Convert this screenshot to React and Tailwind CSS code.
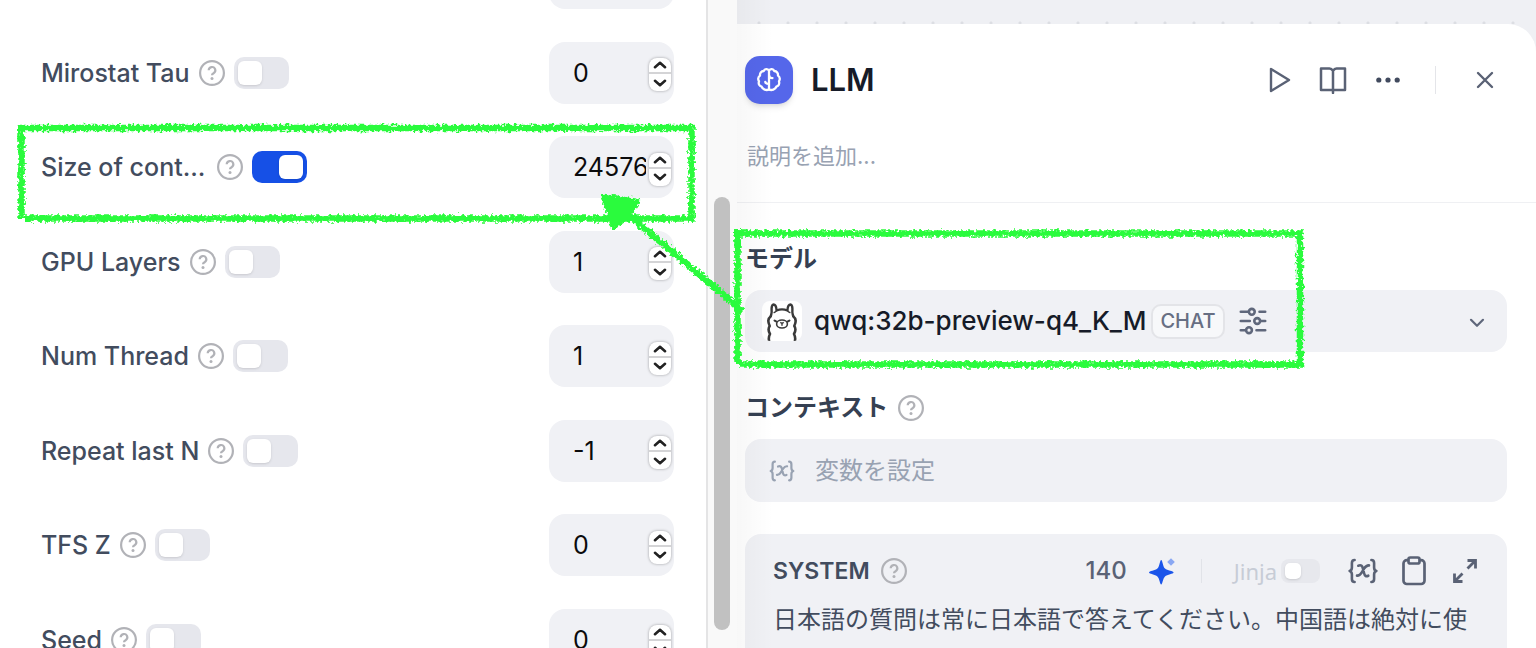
import React, { useState } from 'react'

const ROWS = [
  { id: 'eta', label: '', value: '0', on: false },
  { id: 'tau', label: 'Mirostat Tau', value: '0', on: false },
  { id: 'ctx', label: 'Size of cont...', value: '24576', on: true },
  { id: 'gpu', label: 'GPU Layers', value: '1', on: false },
  { id: 'thread', label: 'Num Thread', value: '1', on: false },
  { id: 'repeat', label: 'Repeat last N', value: '-1', on: false },
  { id: 'tfs', label: 'TFS Z', value: '0', on: false },
  { id: 'seed', label: 'Seed', value: '0', on: false },
]

function Help() {
  return (
    <svg viewBox="0 0 26 26" className="size-[26px] shrink-0 text-[#b1b2b7]" fill="none" stroke="currentColor" aria-hidden="true">
      <circle cx="13" cy="13" r="11.900" strokeWidth="2.200" />
      <path d="M9.700 10.300a3.300 3.300 0 1 1 4.900 2.900c-1.100.6-1.600 1-1.600 2.100" strokeWidth="2.200" />
      <circle cx="13" cy="18.400" r="1.500" fill="currentColor" stroke="none" />
    </svg>
  )
}

function Switch({ label, initial }) {
  const [on, setOn] = useState(initial)
  return (
    <button
      type="button"
      role="switch"
      aria-checked={on}
      aria-label={label}
      onClick={() => setOn(!on)}
      className={`flex h-8 w-[55px] shrink-0 rounded-[10px] p-1 ${on ? 'justify-end bg-[#1650e6]' : 'justify-start bg-[#e6e7ed]'}`}
    >
      <span className="size-6 rounded-[6px] bg-white shadow-sm" />
    </button>
  )
}

function NumberBox({ id, initial }) {
  const [value, setValue] = useState(initial)
  const step = (n) => setValue(String(Number(value) + n))
  return (
    <div className="flex h-[62px] w-[125px] shrink-0 items-center rounded-2xl bg-[#f0f1f5] pl-6 pr-[3px]">
      <input
        id={id}
        inputMode="numeric"
        value={value}
        onChange={(e) => setValue(e.target.value)}
        className="w-[73px] min-w-0 bg-transparent text-[25px] leading-8 text-[#0b0b0c] outline-none"
      />
      <div className="ml-auto mt-1 flex flex-col divide-y-2 divide-[#d4d4d6] overflow-hidden rounded-[8px] bg-white shadow-[0_0_3px_rgba(0,0,0,0.35)]">
        <button type="button" aria-label="Increase" onClick={() => step(1)} className="flex h-4 w-[22px] items-center justify-center">
          <svg viewBox="0 0 14 8" className="h-2 w-3.5" fill="none" stroke="#222" strokeWidth="2.600" strokeLinecap="round" strokeLinejoin="round"><path d="M2 6.200 7 1.800l5 4.400" /></svg>
        </button>
        <button type="button" aria-label="Decrease" onClick={() => step(-1)} className="flex h-[17px] w-[22px] items-center justify-center">
          <svg viewBox="0 0 14 8" className="h-2 w-3.5" fill="none" stroke="#222" strokeWidth="2.600" strokeLinecap="round" strokeLinejoin="round"><path d="M2 1.800 7 6.200l5-4.400" /></svg>
        </button>
      </div>
    </div>
  )
}

function VarIcon({ className }) {
  return (
    <svg viewBox="0 0 30 26" className={className} fill="none" stroke="currentColor" strokeWidth="2.600" strokeLinecap="round" strokeLinejoin="round" aria-hidden="true">
      <path d="M6.600 2C4.500 2 3.900 3 3.900 5v4.500c0 2-.8 3.100-2.300 3.500 1.500.4 2.300 1.500 2.300 3.500V21c0 2 .6 3 2.700 3" />
      <path d="M23.400 2c2.100 0 2.700 1 2.700 3v4.500c0 2 .8 3.100 2.300 3.500-1.500.4-2.300 1.500-2.300 3.500V21c0 2-.6 3-2.700 3" />
      <path d="M10.300 7.700c2.800-1.100 3.900.2 4.500 2.400l1.300 5.200c.6 2.400 1.800 3.500 4.200 2.400M21 7.400c-1.900-.2-3.300.9-4.900 3.200l-2.500 4c-1.300 2.200-2.600 3.200-4.600 3" />
    </svg>
  )
}

function BrainIcon() {
  return (
    <svg viewBox="0 0 26 26" className="size-[26px]" fill="none" stroke="#fff" strokeWidth="2.300" strokeLinecap="round" strokeLinejoin="round" aria-hidden="true">
      <path d="M13 3.500v19" />
      <path d="M13 3.300C11.500 1.600 8.700 1.700 7.700 4 5.200 4.200 3.700 6.200 4 8.600 2 10 1.700 12.600 3 14.300c-.9 2.500.4 4.700 2.600 5.300.9 2.800 4.900 4.300 7.400 2.700" />
      <path d="M13 3.300c1.500-1.700 4.300-1.600 5.300.7 2.500.2 4 2.200 3.700 4.600 2 1.400 2.300 4 1 5.700.9 2.500-.4 4.700-2.600 5.300-.9 2.800-4.900 4.300-7.400 2.700" />
      <path d="M9.300 14.800c0 1.300 1 2 3.400 2M13.300 9c0 1.700 1.200 2.100 3.200 2.100" />
    </svg>
  )
}

function LlamaIcon() {
  return (
    <svg viewBox="0 0 40 40" className="size-10 shrink-0 rounded-[8px] bg-white" fill="none" stroke="#3a3a3a" strokeLinecap="round" strokeLinejoin="round" aria-hidden="true">
      <path strokeWidth="2.600" d="M7 39.500c-.6-3 .1-4.800 1-6.500-1.800-3-1.900-5.600-.3-8-1.700-3.600-1.900-7.500.9-9.500" />
      <path strokeWidth="2.600" d="M33 39.500c.6-3-.1-4.800-1-6.500 1.800-3 1.900-5.600.3-8 1.700-3.600 1.900-7.500-.9-9.500" />
      <path strokeWidth="2.400" d="M8.800 15c.6-2.500 1.200-3 .8-5.500-.2-3 .4-6 1.800-6 1.900 0 3 2.600 3.200 6 3-1.300 7.800-1.300 10.800 0 .2-3.400 1.300-6 3.200-6 1.400 0 2 3 1.800 6-.4 2.500.2 3 .8 5.500" />
      <path strokeWidth="1.500" d="M12.200 11.500c1-.2 1.800-.8 2.400-2M27.800 11.500c-1-.2-1.800-.8-2.400-2" />
      <ellipse cx="20" cy="23" rx="5.400" ry="4" strokeWidth="1.600" />
      <path strokeWidth="1.400" d="m18.800 21.600 1.200.9 1.200-.9M20 22.500v1.700" />
      <path strokeWidth="2.200" d="M12.600 19.600l1.500.8M27.400 19.600l-1.500.8" />
    </svg>
  )
}

function SettingsPanel() {
  return (
    <section className="min-w-0 overflow-hidden bg-white">
      <ul className="-mt-[69px] pl-[41px] pr-8">
        {ROWS.map((row) => (
          <li key={row.id} className="flex items-center justify-between odd:h-[94px] even:h-[95px]">
            <div className="flex items-center gap-[9px]">
              <label htmlFor={row.id} className={`whitespace-nowrap text-[25px] font-medium leading-8 text-[#424c5e] ${row.on ? 'w-[167px]' : ''}`}>
                {row.label}
              </label>
              <Help />
              <Switch label={row.label} initial={row.on} />
            </div>
            <NumberBox id={row.id} initial={row.value} />
          </li>
        ))}
      </ul>
    </section>
  )
}

function NodeHeader() {
  return (
    <header className="border-b border-[#eff0f3] pb-[30px] pl-2 pr-[42px] pt-8">
      <div className="flex h-12 items-center">
        <span className="flex size-12 items-center justify-center rounded-[15px] bg-[#5567ea] shadow-md">
          <BrainIcon />
        </span>
        <h1 className="ml-[18px] text-[31px] font-semibold leading-10 text-[#161b28]">LLM</h1>
        <div className="ml-auto flex items-center text-[#5a6275]">
          <button type="button" aria-label="Run">
            <svg viewBox="0 0 22 26" className="h-[26px] w-[22px]" fill="none" stroke="currentColor" strokeWidth="2.400" strokeLinejoin="round"><path d="M2 2v22l18-11z" /></svg>
          </button>
          <button type="button" aria-label="Documentation" className="ml-7">
            <svg viewBox="0 0 28 28" className="size-7" fill="none" stroke="currentColor" strokeWidth="2.500" strokeLinejoin="round" strokeLinecap="round"><path d="M14 4.800V27M14 4.800C13 3.200 12 2.500 10.500 2.500H2v21.500h24V2.500h-8.500C16 2.500 15 3.200 14 4.800z" /></svg>
          </button>
          <button type="button" aria-label="More" className="ml-7 text-[#414a5e]">
            <svg viewBox="0 0 26 26" className="size-[26px]" fill="currentColor"><circle cx="3.800" cy="13" r="2.600" /><circle cx="13" cy="13" r="2.600" /><circle cx="22.200" cy="13" r="2.600" /></svg>
          </button>
          <span className="ml-[34px] h-7 w-px bg-[#e4e5e9]" />
          <button type="button" aria-label="Close" className="ml-10">
            <svg viewBox="0 0 18 18" className="size-[18px]" fill="none" stroke="currentColor" strokeWidth="2.400" strokeLinecap="round"><path d="m2 2 14 14M16 2 2 16" /></svg>
          </button>
        </div>
      </div>
      <input
        aria-label="説明"
        placeholder="説明を追加..."
        className="mt-9 block h-8 w-full bg-transparent pl-[2px] text-[22px] text-[#98a2b2] outline-none placeholder:text-[#98a2b2] placeholder:opacity-100"
      />
    </header>
  )
}

function ModelField() {
  return (
    <div>
      <h2 className="text-[24px] font-semibold leading-8 text-[#354052]">モデル</h2>
      <div className="mt-[15px] flex h-[62px] items-center rounded-2xl bg-[#f0f1f5] pl-[17px] pr-[22px]">
        <LlamaIcon />
        <span className="ml-3 whitespace-nowrap text-[26px] font-medium leading-8 text-[#161b28]">qwq:32b-preview-q4_K_M</span>
        <span className="ml-[5px] flex h-[35px] items-center rounded-[10px] border-2 border-[#e3e4e8] bg-[#f7f8fa] px-[7px] text-[20px] font-medium text-[#676f83]">CHAT</span>
        <button type="button" aria-label="Model parameters" className="ml-[14px] text-[#5f677b]">
          <svg viewBox="0 0 28 28" className="size-7" fill="none" stroke="currentColor" strokeWidth="2.600" strokeLinecap="round">
            <path d="M1.800 4.800h7.700M20.500 4.800h5.700M1.800 14h9M21.500 14h4.700M1.800 23.200h5M17.500 23.200h8.700" />
            <circle cx="12.800" cy="4.800" r="2.900" /><circle cx="18.200" cy="14" r="2.900" /><circle cx="10" cy="23.200" r="2.900" />
          </svg>
        </button>
        <button type="button" aria-label="Choose model" className="ml-auto text-[#5f677b]">
          <svg viewBox="0 0 16 10" className="mt-[3px] h-[10px] w-4" fill="none" stroke="currentColor" strokeWidth="2.200" strokeLinecap="round" strokeLinejoin="round"><path d="m2 1.800 6 6 6-6" /></svg>
        </button>
      </div>
    </div>
  )
}

function ContextField() {
  return (
    <div className="mt-10">
      <h2 className="flex items-center gap-[10px] text-[24px] font-semibold leading-8 text-[#354052]">
        コンテキスト
        <Help />
      </h2>
      <button type="button" className="mt-[15px] flex h-[63px] w-full items-center gap-5 rounded-2xl bg-[#f0f1f5] pl-6 text-[24px] leading-8 text-[#98a2b2]">
        <VarIcon className="h-[22px] w-[26px]" />
        変数を設定
      </button>
    </div>
  )
}

function SystemPrompt() {
  const [jinja, setJinja] = useState(false)
  return (
    <div className="mt-8 rounded-2xl bg-[#f0f1f5] pb-6 pl-7 pr-7 pt-[21px]">
      <div className="flex h-8 items-center">
        <label htmlFor="system" className="mr-[11px] text-[23px] font-semibold leading-8 text-[#424c5e]">SYSTEM</label>
        <Help />
        <div className="ml-auto flex items-center text-[#5a6275]">
          <span className="text-[24px] font-medium leading-8">140</span>
          <button type="button" aria-label="Generate prompt" className="ml-[22px]">
            <svg viewBox="0 0 26 28" className="h-7 w-[26px]">
              <path fill="#1b55ea" d="M12.200 3c1.300 0 1.600 6.600 3.800 8.600 2.100 2 8.600 2.500 8.600 3.900s-6.500 1.900-8.600 3.900c-2.200 2-2.500 8.100-3.800 8.100s-1.600-6.100-3.800-8.100C6.300 17.400 0 16.900 0 15.500s6.300-1.900 8.400-3.900c2.200-2 2.500-8.600 3.800-8.600z" />
              <path fill="#8aa8f3" d="M22 1.200 25.800 5 22 8.800 18.200 5z" />
            </svg>
          </button>
          <span className="ml-[26px] h-6 w-px bg-[#e1e3e8]" />
          <label htmlFor="jinja" className="ml-8 font-['Noto_Sans'] text-[22px] leading-8 text-[#c7ccd6]">Jinja</label>
          <button
            id="jinja"
            type="button"
            role="switch"
            aria-checked={jinja}
            onClick={() => setJinja(!jinja)}
            className={`ml-1 flex h-6 w-[39px] items-center rounded-[8px] p-1 ${jinja ? 'justify-end bg-[#1650e6]' : 'justify-start bg-[#e7e8ed]'}`}
          >
            <span className="size-4 rounded-[5px] bg-white shadow" />
          </button>
          <button type="button" aria-label="Insert variable" className="ml-7">
            <VarIcon className="h-[26px] w-[30px]" />
          </button>
          <button type="button" aria-label="Copy" className="ml-6">
            <svg viewBox="0 0 24 30" className="h-[30px] w-6" fill="none" stroke="currentColor" strokeWidth="2.700" strokeLinejoin="round">
              <path d="M6.500 4.200H4.800a3.300 3.300 0 0 0-3.300 3.300v17.200a3.300 3.300 0 0 0 3.300 3.300h14.400a3.300 3.300 0 0 0 3.300-3.300V7.500a3.300 3.300 0 0 0-3.300-3.300h-1.700" />
              <rect x="6.500" y="1.500" width="11" height="6" rx="1.800" />
            </svg>
          </button>
          <button type="button" aria-label="Expand" className="ml-[26px] mr-px">
            <svg viewBox="0 0 26 26" className="size-[26px]" fill="none" stroke="currentColor" strokeWidth="2.800"><path d="M15.500 2.500h8v8M23.500 2.500l-8 8M2.500 15.500v8h8M2.500 23.500l8-8" /></svg>
          </button>
        </div>
      </div>
      <textarea
        id="system"
        rows={1}
        defaultValue="日本語の質問は常に日本語で答えてください。中国語は絶対に使"
        className="mt-[15px] block w-full resize-none overflow-hidden bg-transparent text-[24px] leading-9 text-[#424c5e] outline-none"
      />
    </div>
  )
}

function Annotations() {
  return (
    <svg viewBox="0 0 1536 648" preserveAspectRatio="none" className="pointer-events-none absolute inset-0 size-full" aria-hidden="true">
      <defs>
        <filter id="marker" filterUnits="userSpaceOnUse" x="0" y="0" width="1536" height="648">
          <feTurbulence type="fractalNoise" baseFrequency="0.35" numOctaves="2" seed="4" result="n" />
          <feDisplacementMap in="SourceGraphic" in2="n" scale="7" xChannelSelector="R" yChannelSelector="G" />
        </filter>
      </defs>
      <g filter="url(#marker)" fill="none" stroke="#2bfb3e" strokeWidth="6.500">
        <path d="M18 128H691.500V218.500H25M21.500 125V218" />
        <path d="M734 233.500H1300V364.500H740M737.500 230V363" />
        <path d="M743 311 626 213" />
        <path d="M604 197 637 202 630 212 614 226z" fill="#2bfb3e" strokeLinejoin="round" />
      </g>
    </svg>
  )
}

export default function App() {
  return (
    <main className="relative grid h-screen grid-cols-[706fr_31fr_799fr] overflow-hidden bg-white font-[Inter,'Noto_Sans_CJK_JP',sans-serif]">
      <SettingsPanel />
      <div className="border-l-2 border-[#e4e4e5] bg-[#f9f9f9] pl-[6px] pt-[197px]">
        <div className="flex">
          <div className="h-[433px] w-4 rounded-full bg-[#c1c1c1]" />
        </div>
      </div>
      <section className="relative flex min-w-0 flex-col overflow-hidden bg-[#eff0f4] bg-[radial-gradient(circle_at_22px_23px,#dcdee3_1px,transparent_2px)] bg-[size:29px_48px]">
        <div className="h-6 shrink-0" />
        <div className="flex-1 rounded-tr-[28px] bg-white">
          <NodeHeader />
          <div className="pl-2 pr-[29px] pt-10">
            <ModelField />
            <ContextField />
            <SystemPrompt />
          </div>
        </div>
        <div className="pointer-events-none absolute inset-y-0 left-0 w-9 bg-linear-to-r from-black/3 to-transparent" />
      </section>
      <Annotations />
    </main>
  )
}
